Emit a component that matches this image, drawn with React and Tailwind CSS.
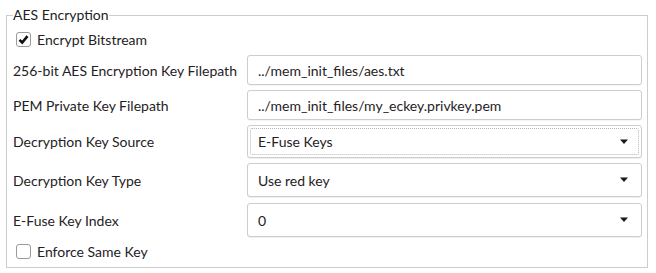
import React from "react";

function Arrow() {
  return (
    <svg width="10" height="6" viewBox="0 0 10 6" className="shrink-0">
      <path d="M1 0.5 L9 0.5 L5 5 Z" fill="#1a1a1a" />
    </svg>
  );
}

function CheckBox({ checked }) {
  return (
    <div className="w-[15px] h-[15px] rounded-[3px] border border-[#9a9a9a] bg-white flex items-center justify-center shrink-0">
      {checked && (
        <svg width="11" height="11" viewBox="0 0 11 11">
          <path d="M1.5 5.8 L4.2 8.5 L9.5 2.2" fill="none" stroke="#111" strokeWidth="2.6" strokeLinejoin="miter" />
        </svg>
      )}
    </div>
  );
}

function Row({ label, children, className }) {
  return (
    <div className={"flex items-center " + className}>
      <div className="w-[234px] shrink-0">{label}</div>
      {children}
    </div>
  );
}

function TextBox({ value, h }) {
  return (
    <div className={"w-[395px] rounded-[3px] border border-[#cdcdcd] bg-white flex items-center pl-[10px] shadow-[0_1px_0_rgba(0,0,0,0.04)] " + h}>
      {value}
    </div>
  );
}

function Combo({ value, h, focused }) {
  return (
    <div className={"relative w-[395px] rounded-[3px] border border-[#cdcdcd] bg-white flex items-center justify-between pl-[10px] pr-[12px] shadow-[0_1px_0_rgba(0,0,0,0.06)] " + h}>
      {focused && (
        <div className="absolute inset-[2px] border border-dotted border-[#b5b5b5] rounded-[2px]" />
      )}
      <span>{value}</span>
      <Arrow />
    </div>
  );
}

export default function App() {
  return (
    <div className="w-[656px] h-[273px] bg-white text-[14px] text-[#1f2224] pl-[6px] pt-[3px]" style={{ fontFamily: "Lato, 'Noto Sans', sans-serif" }}>
      <fieldset className="w-[642px] border border-[#cdcdcd] pl-[6px] pr-[4px] pb-[4px]">
        <legend className="leading-[24px] h-[24px] p-0">AES Encryption</legend>
        <div className="flex flex-col">
          <div className="flex items-center h-[24px] pl-[3px] gap-[6px]">
            <CheckBox checked />
            <span>Encrypt Bitstream</span>
          </div>
          <Row label="256-bit AES Encryption Key Filepath" className="mt-[4px]">
            <TextBox value="../mem_init_files/aes.txt" h="h-[30px]" />
          </Row>
          <Row label="PEM Private Key Filepath" className="mt-[5px]">
            <TextBox value="../mem_init_files/my_eckey.privkey.pem" h="h-[30px]" />
          </Row>
          <Row label="Decryption Key Source" className="mt-[5px]">
            <Combo value="E-Fuse Keys" h="h-[33px]" focused />
          </Row>
          <Row label="Decryption Key Type" className="mt-[5px]">
            <Combo value="Use red key" h="h-[34px]" />
          </Row>
          <Row label="E-Fuse Key Index" className="mt-[6px]">
            <Combo value="0" h="h-[34px]" />
          </Row>
          <div className="flex items-center h-[24px] mt-[2px] pl-[3px] gap-[6px]">
            <CheckBox />
            <span>Enforce Same Key</span>
          </div>
        </div>
      </fieldset>
    </div>
  );
}
